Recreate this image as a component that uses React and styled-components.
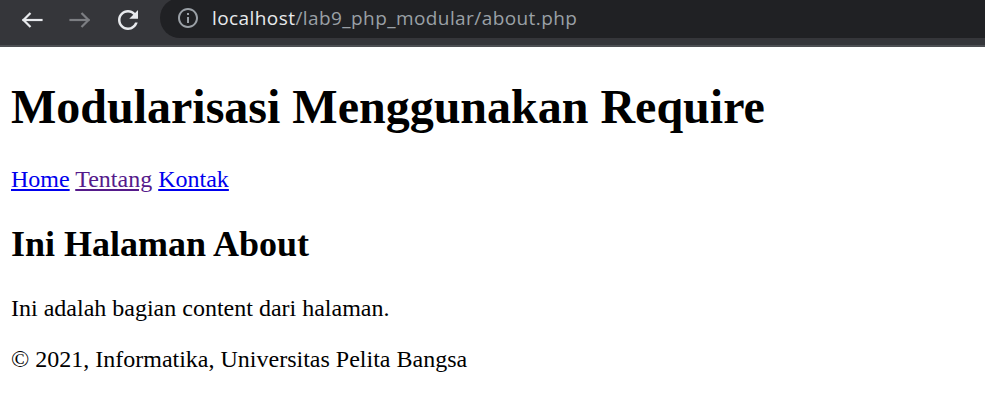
import React from "react";
import styled, { createGlobalStyle } from "styled-components";

const GlobalStyle = createGlobalStyle`
  html, body { margin: 0; padding: 0; background: #ffffff; }
  body { font-family: "Liberation Serif", "Times New Roman", serif; }
`;

const Toolbar = styled.header`
  display: flex;
  align-items: flex-start;
  height: 45px;
  padding-left: 8px;
  background: #35363a;
  border-bottom: 2px solid #4d4f53;
  overflow: hidden;
`;

const IconButton = styled.div`
  display: flex;
  align-items: center;
  justify-content: center;
  width: 48px;
  height: 39px;
  flex: none;
  color: ${(p) => (p.$disabled ? "#7c7e82" : "#e8eaed")};
`;

const UrlPill = styled.div`
  display: flex;
  align-items: center;
  flex: 1;
  height: 40px;
  margin-top: -2px;
  margin-left: 8px;
  padding-left: 16px;
  background: #202124;
  border-radius: 20px 0 0 20px;
`;

const InfoIcon = styled.div`
  display: flex;
  width: 24px;
  height: 24px;
  color: #9aa0a6;
  margin-top: -1px;
`;

const UrlText = styled.div`
  margin-left: 12px;
  font-family: "Open Sans", "Noto Sans", sans-serif;
  font-size: 19px;
  letter-spacing: 0.42px;
  color: #9aa0a6;
  white-space: nowrap;
  margin-top: -1px;
`;

const Host = styled.span`
  color: #e8eaed;
`;

const Page = styled.main`
  margin: 12px 12px 12px 11px;
  font-family: "Liberation Serif", "Times New Roman", serif;
  font-size: 24px;
  color: #000;
`;

const Title = styled.h1`
  font-size: 48px;
  margin: 0.67em 0;
  font-weight: bold;
`;

const Nav = styled.nav``;

const NavLink = styled.a`
  color: ${(p) => (p.$visited ? "#551a8b" : "#0000ee")};
  text-decoration: underline;
`;

const SubTitle = styled.h2`
  font-size: 36px;
  margin: 0.83em 0;
  font-weight: bold;
`;

const Paragraph = styled.p`
  margin: 1em 0;
`;

const Footer = styled.footer``;

const BackIcon = () => (
  <svg width="22" height="18" viewBox="0 0 22 18" fill="none" stroke="currentColor" strokeWidth="2.2" strokeLinecap="square">
    <path d="M2.5 9H20.5" />
    <path d="M9.5 2L2.5 9L9.5 16" strokeLinecap="butt" />
  </svg>
);

const ForwardIcon = () => (
  <svg width="22" height="18" viewBox="0 0 22 18" fill="none" stroke="currentColor" strokeWidth="2.2" strokeLinecap="square">
    <path d="M1.5 9H19.5" />
    <path d="M12.5 2L19.5 9L12.5 16" strokeLinecap="butt" />
  </svg>
);

const ReloadIcon = () => (
  <svg width="30" height="30" viewBox="0 0 24 24" fill="currentColor">
    <path d="M17.65 6.35C16.2 4.9 14.21 4 12 4c-4.42 0-7.99 3.58-7.99 8s3.57 8 7.99 8c3.730 0 6.84-2.55 7.73-6h-2.08c-.82 2.33-3.04 4-5.65 4-3.31 0-6-2.690-6-6s2.69-6 6-6c1.66 0 3.14.69 4.22 1.78L13 11h7V4l-2.35 2.35z" />
  </svg>
);

const InfoSvg = () => (
  <svg width="24" height="24" viewBox="0 0 24 24" fill="currentColor">
    <path d="M11 7h2v2h-2zm0 4h2v6h-2zm1-9C6.48 2 2 6.48 2 12s4.48 10 10 10 10-4.48 10-10S17.52 2 12 2zm0 18c-4.41 0-8-3.59-8-8s3.59-8 8-8 8 3.59 8 8-3.59 8-8 8z" />
  </svg>
);

export default function App() {
  return (
    <>
      <GlobalStyle />
      <Toolbar>
        <IconButton><BackIcon /></IconButton>
        <IconButton $disabled><ForwardIcon /></IconButton>
        <IconButton><ReloadIcon /></IconButton>
        <UrlPill>
          <InfoIcon><InfoSvg /></InfoIcon>
          <UrlText>
            <Host>localhost</Host>/lab9_php_modular/about.php
          </UrlText>
        </UrlPill>
      </Toolbar>
      <Page>
        <Title>Modularisasi Menggunakan Require</Title>
        <Nav>
          <NavLink href="#home">Home</NavLink>{" "}
          <NavLink href="#tentang" $visited>Tentang</NavLink>{" "}
          <NavLink href="#kontak">Kontak</NavLink>
        </Nav>
        <SubTitle>Ini Halaman About</SubTitle>
        <Paragraph>Ini adalah bagian content dari halaman.</Paragraph>
        <Footer>
          <Paragraph>© 2021, Informatika, Universitas Pelita Bangsa</Paragraph>
        </Footer>
      </Page>
    </>
  );
}
